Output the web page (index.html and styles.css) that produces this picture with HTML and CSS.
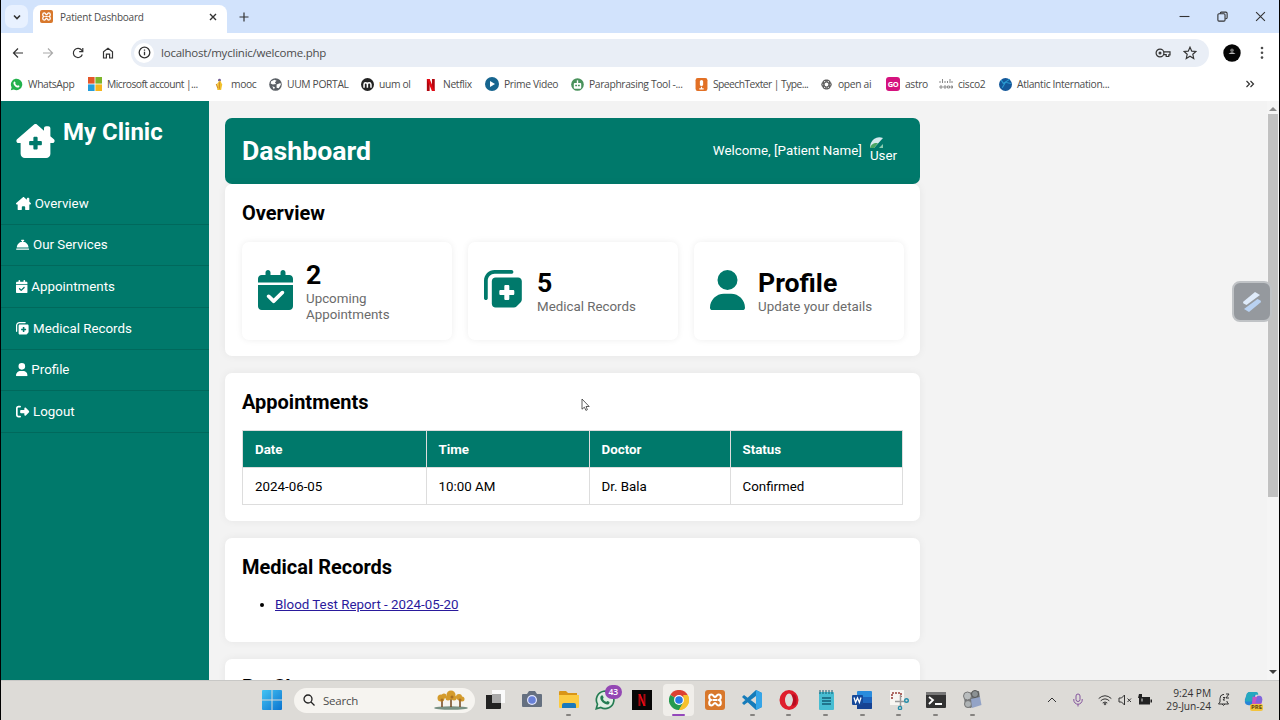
FILE: index.html
```html
<!DOCTYPE html>
<html lang="en">
<head>
    <meta charset="UTF-8">
    <meta name="viewport" content="width=device-width, initial-scale=1.0">
    <title>Patient Dashboard</title>
    <link rel="stylesheet" href="styles.css">
</head>
<body>

<!-- Shared icons -->
<svg class="sprite">
    <symbol id="i-clinic" viewBox="0 0 576 512"><path d="M543.8 287.6c17 0 32-14 32-32.1c1-9-3-17-11-24L512 185V64c0-17.7-14.3-32-32-32H448c-17.7 0-32 14.3-32 32v36.7L309.5 7c-6-5-14-7-21-7s-15 1-22 8L10 231.5c-7 7-10 15-10 24c0 18 14 32.1 32 32.1h32V448c0 35.3 28.7 64 64 64H448.5c35.5 0 64.2-28.8 64-64.3l-.7-160.2h32zM256 208c0-8.8 7.2-16 16-16h32c8.8 0 16 7.2 16 16v48h48c8.8 0 16 7.2 16 16v32c0 8.8-7.2 16-16 16H320v48c0 8.8-7.2 16-16 16H272c-8.8 0-16-7.2-16-16V320H208c-8.8 0-16-7.2-16-16V272c0-8.8 7.2-16 16-16h48V208z"/></symbol>
    <symbol id="i-home" viewBox="0 0 576 512"><path d="M575.8 255.5c0 18-15 32.1-32 32.1h-32l.7 160.2c0 2.7-.2 5.4-.5 8.1V472c0 22.1-17.9 40-40 40H392c-22.1 0-40-17.9-40-40V384c0-17.7-14.3-32-32-32H256c-17.7 0-32 14.3-32 32v88c0 22.1-17.9 40-40 40H104c-22.1 0-40-17.9-40-40V287.6H32c-18 0-32-14-32-32.1c0-9 3-17 10-24L266.4 8c7-7 15-8 22-8s15 2 21 7L416 101V64c0-18 14-32 32-32h32c18 0 32 14 32 32v121l52.800 46.500c8 7 12 15 11 24z"/></symbol>
    <symbol id="i-bell" viewBox="0 0 512 512"><path d="M216 64c-13.3 0-24 10.7-24 24s10.7 24 24 24h16v33.3C119.6 157.2 32 252.4 32 368H480c0-115.6-87.6-210.8-200-222.7V112h16c13.3 0 24-10.7 24-24s-10.7-24-24-24H216zM24 400c-13.3 0-24 10.7-24 24s10.7 24 24 24H488c13.3 0 24-10.7 24-24s-10.7-24-24-24H24z"/></symbol>
    <symbol id="i-calendar" viewBox="0 0 448 512"><path d="M128 0c17.7 0 32 14.3 32 32V64H288V32c0-17.7 14.3-32 32-32s32 14.3 32 32V64h48c26.5 0 48 21.5 48 48v48H0V112C0 85.5 21.5 64 48 64H96V32c0-17.7 14.3-32 32-32zM0 192H448V464c0 26.5-21.5 48-48 48H48c-26.5 0-48-21.5-48-48V192zM329 305c9.4-9.4 9.4-24.6 0-33.9s-24.6-9.4-33.9 0l-95 95-47-47c-9.4-9.4-24.6-9.4-33.9 0s-9.4 24.6 0 33.9l64 64c9.4 9.4 24.6 9.4 33.9 0L329 305z"/></symbol>
    <symbol id="i-notes" viewBox="0 0 512 512"><path d="M148 96H436c26 0 48 21 48 48V378c0 14-5 26-14 35l-54 54c-9 9-21 13-34 13H148c-27 0-48-21-48-48V144c0-27 21-48 48-48zM276 192c-9 0-16 7-16 16v48H212c-9 0-16 7-16 16v32c0 9 7 16 16 16h48v48c0 9 7 16 16 16h32c9 0 16-7 16-16V320h48c9 0 16-7 16-16V272c0-9-7-16-16-16H324V208c0-9-7-16-16-16H276zM24 384c-13 0-24-11-24-24V136C0 61 61 0 136 0H352c13 0 24 11 24 24s-11 24-24 24H136c-49 0-88 39-88 88V360c0 13-11 24-24 24z"/></symbol>
    <symbol id="i-user" viewBox="0 0 448 512"><path d="M224 256A128 128 0 1 0 224 0a128 128 0 1 0 0 256zm-45.700 48C79.800 304 0 383.800 0 482.300C0 498.700 13.300 512 29.700 512H418.300c16.400 0 29.700-13.300 29.700-29.700C448 383.800 368.200 304 269.700 304H178.300z"/></symbol>
    <symbol id="i-logout" viewBox="0 0 512 512"><path d="M377.9 105.9L500.7 228.7c7.2 7.2 11.3 17.1 11.3 27.3s-4.1 20.1-11.3 27.3L377.9 406.1c-6.4 6.4-15 9.9-24 9.9c-18.7 0-33.9-15.2-33.9-33.9V320H192c-17.7 0-32-14.3-32-32v-64c0-17.7 14.3-32 32-32h128v-62.1c0-18.7 15.2-33.9 33.9-33.9c9 0 17.6 3.6 24 9.9zM160 96H96c-17.7 0-32 14.3-32 32v256c0 17.7 14.3 32 32 32h64c17.7 0 32 14.3 32 32s-14.3 32-32 32H96c-53 0-96-43-96-96V128C0 75 43 32 96 32h64c17.7 0 32 14.3 32 32s-14.3 32-32 32z"/></symbol>
    <symbol id="i-xampp" viewBox="0 0 20 20"><rect width="20" height="20" rx="3" fill="#d8782c"/><path d="M6.500 4.500C3.500 4.500 3.500 9 6 10C3.500 11 3.500 15.500 6.500 15.500C8.500 15.500 8.500 13 10 13S11.500 15.500 13.500 15.500C16.500 15.500 16.500 11 14 10C16.500 9 16.500 4.500 13.500 4.500C11.500 4.500 11.500 7 10 7S8.500 4.500 6.500 4.500z" fill="none" stroke="#fff" stroke-width="2"/><path d="M8 10h4" stroke="#fff" stroke-width="2"/></symbol>
    <symbol id="i-whatsapp" viewBox="0 0 24 24"><path d="M1.500 22.500L3 17A10.500 10.500 0 1 1 7 21z"/></symbol>
    <symbol id="i-phone" viewBox="0 0 24 24"><path d="M8 6.500c.8-.3 1.300 0 1.600.8l.7 1.700c.2.500-.9 1.400-.7 1.800.8 1.600 2 2.700 3.700 3.400.5.200 1.300-1.300 1.800-1l2 1c.7.300.4 2.100-.7 2.800-3.500 2-10.500-3.600-10-8 .1-1.300.8-2.200 1.600-2.500z"/></symbol>
</svg>

<div class="window">

    <div class="tab-strip">
        <div class="tab-search"><svg viewBox="0 0 10 10"><path d="M2 3.500l3 3 3-3"/></svg></div>
        <div class="tab">
            <svg class="tab-favicon"><use href="#i-xampp"/></svg>
            <span class="tab-title">Patient Dashboard</span>
            <svg class="tab-close" viewBox="0 0 8 8"><path d="M1 1l6 6M7 1L1 7"/></svg>
        </div>
        <svg class="new-tab" viewBox="0 0 10 10"><path d="M5 .5v9M.5 5h9"/></svg>
        <div class="window-buttons">
            <svg viewBox="0 0 10 10"><path d="M.5 5h9"/></svg>
            <svg viewBox="0 0 10 10"><rect x=".8" y="2.500" width="6.500" height="6.700" rx="1"/><path d="M3 2.500V2a1 1 0 0 1 1-1h4a1.200 1.200 0 0 1 1.200 1.200V6a1 1 0 0 1-1 1h-.7"/></svg>
            <svg viewBox="0 0 10 10"><path d="M1 1l8 8M9 1L1 9"/></svg>
        </div>
    </div>

    <div class="toolbar">
        <div class="nav-buttons">
            <svg viewBox="0 0 12 12"><path d="M11 6H1.500M6 1.500L1.500 6 6 10.500"/></svg>
            <svg class="disabled" viewBox="0 0 12 12"><path d="M1 6h9.500M6 1.500L10.500 6 6 10.500"/></svg>
            <svg viewBox="0 0 12 12"><path d="M10.300 7.500A4.600 4.600 0 1 1 9.700 3.200L10.700 4.500M10.800 1v3.700H7.200"/></svg>
            <svg viewBox="0 0 12 12"><path d="M1.500 11V4.700L6 1.200l4.500 3.500V11H7.600V7.200H4.400V11z"/></svg>
        </div>
        <div class="address">
            <span class="site-info"><svg viewBox="0 0 12 12"><circle cx="6" cy="6" r="4.900"/><path d="M6 5.400v3.200M6 3.300v1"/></svg></span>
            <span class="url">localhost/myclinic/welcome.php</span>
            <svg class="key" viewBox="0 0 16 10"><circle cx="5" cy="5" r="3.900"/><circle cx="5" cy="5" r=".9"/><path d="M8.700 3.800H15v3h-1.200v1.700h-2.600V6.600H8.700"/></svg>
            <svg class="star" viewBox="0 0 12 12"><path d="M6 1l1.500 3.400 3.600.3-2.700 2.400.8 3.600L6 8.800l-3.200 1.900.8-3.600L.9 4.700l3.600-.3z"/></svg>
        </div>
        <svg class="avatar" viewBox="0 0 18 18"><circle cx="9" cy="9" r="8.700" fill="#050505"/><circle cx="9" cy="6.300" r="1.800" fill="#777"/><path d="M5.500 10q3.500-3.500 7 0z" fill="#bbb"/></svg>
        <svg class="more" viewBox="0 0 4 14"><circle cx="2" cy="2" r="1.300"/><circle cx="2" cy="6.800" r="1.300"/><circle cx="2" cy="11.600" r="1.300"/></svg>
    </div>

    <div class="bookmarks">
        <div class="bookmark"><svg viewBox="0 0 24 24"><use href="#i-whatsapp" fill="#22b14c"/><use href="#i-phone" fill="#fff"/></svg>WhatsApp</div>
        <div class="bookmark"><svg class="wide" viewBox="0 0 14 14"><path fill="#e4572a" d="M0 0h6.600v6.600H0z"/><path fill="#7db52a" d="M7.400 0H14v6.600H7.400z"/><path fill="#259edb" d="M0 7.400h6.600V14H0z"/><path fill="#f5b51d" d="M7.400 7.400H14V14H7.400z"/></svg><span class="tight">Microsoft account |...</span></div>
        <div class="bookmark mooc"><svg viewBox="0 0 12 12"><circle cx="6" cy="2" r="1.300" fill="#6e5a94"/><path d="M4 5l2.500-3L8.500 6 7.500 11H4z" fill="#f2c22e"/><path d="M3 5.500l1.500 4M6 4v6" stroke="#d49028" stroke-width="1"/></svg>mooc</div>
        <div class="bookmark"><svg viewBox="0 0 12 12"><circle cx="6" cy="6" r="5.800" fill="#5a5f65"/><path d="M2 3l3-1.500 2 1L5.500 4 6.500 5.500 3.500 6 1.500 5zM7 6l3.500-1.500.5 1.500-2 3.500-2-.5zM3 7.500l2.500 1-1 2.200z" fill="#fff"/></svg>UUM PORTAL</div>
        <div class="bookmark"><svg viewBox="0 0 12 12"><circle cx="6" cy="6" r="6" fill="#222"/><path d="M2.800 9V6q0-1.600 1.500-1.600T5.900 6v3V6q0-1.600 1.600-1.600T9.200 6v3" fill="none" stroke="#fff" stroke-width="1.400"/></svg>uum ol</div>
        <div class="bookmark netflix"><svg viewBox="0 0 12 14"><path d="M1 1h3v13H1zM6.500 1h3v13h-3z" fill="#b1060f"/><path d="M1 1h3l5.500 13h-3z" fill="#e50914"/></svg>Netflix</div>
        <div class="bookmark"><svg class="wide" viewBox="0 0 14 14"><circle cx="7" cy="7" r="7" fill="#17658f"/><path d="M5 4l5 3-5 3z" fill="#fff"/></svg>Prime Video</div>
        <div class="bookmark"><svg viewBox="0 0 14 14"><circle cx="7" cy="7" r="6.800" fill="#4a925c"/><rect x="3" y="5.500" width="8" height="6" rx="1" fill="#fff"/><path d="M7 6V2.500" stroke="#fff" stroke-width="1.500"/><path d="M4.500 8h2M7.500 8h2" stroke="#4a925c" stroke-width="1.500"/></svg><span>Paraphrasing Tool -...</span></div>
        <div class="bookmark"><svg viewBox="0 0 12 12"><rect x=".5" width="11" height="12" rx="2" fill="#e27025"/><rect x="4.500" y="1.800" width="3" height="5.600" rx="1.500" fill="#fff"/><path d="M6 8v2.500M4 10h4" stroke="#fff"/></svg><span class="tight">SpeechTexter | Type...</span></div>
        <div class="bookmark"><svg class="small" viewBox="0 0 12 12"><g fill="none" stroke="#555"><ellipse cx="6" cy="6" rx="5" ry="2.500"/><ellipse cx="6" cy="6" rx="5" ry="2.500" transform="rotate(60 6 6)"/><ellipse cx="6" cy="6" rx="5" ry="2.500" transform="rotate(120 6 6)"/><circle cx="6" cy="6" r="5"/></g></svg>open ai</div>
        <div class="bookmark"><span class="go">GO</span>astro</div>
        <div class="bookmark"><svg class="wide" viewBox="0 0 14 12"><path d="M1 3v2M3.500 1v4M6 3v2M8.500 3v2M11 1v4M13 3v2" stroke="#888"/><path d="M1 8h2v2H1zM5 8h2v2H5zM8.500 8h2v2h-2zM12 8h1.500v2H12z" fill="none" stroke="#777" stroke-width=".8"/></svg>cisco2</div>
        <div class="bookmark"><svg viewBox="0 0 12 12"><circle cx="6" cy="6" r="6" fill="#14589a"/><path d="M2 2l2 3 6-4M3 9l3-5 5 1" stroke="#2a9ad0" fill="none"/></svg>Atlantic Internation...</div>
        <svg class="overflow" viewBox="0 0 10 8"><path d="M1.500 1l3 3-3 3M5.500 1l3 3-3 3"/></svg>
    </div>

    <div class="viewport">
        <nav class="sidebar">
            <div class="logo"><svg><use href="#i-clinic"/></svg><h2>My Clinic</h2></div>
            <ul>
                <li><svg class="w576"><use href="#i-home"/></svg> Overview</li>
                <li><svg><use href="#i-bell"/></svg> Our Services</li>
                <li><svg class="w448"><use href="#i-calendar"/></svg> Appointments</li>
                <li><svg><use href="#i-notes"/></svg> Medical Records</li>
                <li><svg class="w448"><use href="#i-user"/></svg> Profile</li>
                <li><svg><use href="#i-logout"/></svg> Logout</li>
            </ul>
        </nav>

        <main class="main-content">
            <header>
                <h1>Dashboard</h1>
                <div class="user-info">
                    <span>Welcome, [Patient Name]</span>
                    <div class="user-image">
                        <svg viewBox="0 0 13 12"><path d="M0 11Q0 5 4 2t9-1L4 11z" fill="#d5e9ed"/><path d="M0 11q1-4 5-5l3 0-4 5z" fill="#4aa564"/><path d="M9 11l4-4v4z" fill="#8acbb0"/></svg>
                        <span>User</span>
                    </div>
                </div>
            </header>

            <section>
                <h2>Overview</h2>
                <div class="cards">
                    <div class="card">
                        <svg class="w448"><use href="#i-calendar"/></svg>
                        <div><h3>2</h3><p>Upcoming Appointments</p></div>
                    </div>
                    <div class="card">
                        <svg><use href="#i-notes"/></svg>
                        <div><h3>5</h3><p>Medical Records</p></div>
                    </div>
                    <div class="card">
                        <svg class="w448"><use href="#i-user"/></svg>
                        <div><h3>Profile</h3><p>Update your details</p></div>
                    </div>
                </div>
            </section>

            <section>
                <h2>Appointments</h2>
                <table>
                    <thead>
                        <tr><th class="date">Date</th><th class="time">Time</th><th class="doctor">Doctor</th><th>Status</th></tr>
                    </thead>
                    <tbody>
                        <tr><td>2024-06-05</td><td>10:00 AM</td><td>Dr. Bala</td><td>Confirmed</td></tr>
                    </tbody>
                </table>
            </section>

            <section class="records">
                <h2>Medical Records</h2>
                <ul><li><a href="#">Blood Test Report - 2024-05-20</a></li></ul>
            </section>

            <section class="profile">
                <h2>Profile</h2>
            </section>
        </main>

        <div class="scrollbar">
            <svg viewBox="0 0 8 5"><path d="M0 5l4-4 4 4z" fill="#8b8b8b"/></svg>
            <div class="thumb"></div>
            <svg viewBox="0 0 8 5"><path d="M0 0l4 4 4-4z" fill="#404040"/></svg>
        </div>
    </div>

    <div class="taskbar">
        <div class="start"><svg viewBox="0 0 20 20"><defs><linearGradient id="win" x2="1" y2="1"><stop stop-color="#45c4f3"/><stop offset="1" stop-color="#0a73cf"/></linearGradient></defs><path fill="url(#win)" d="M0 1q0-1 1-1h8.500v9.500H0zM10.500 0H19q1 0 1 1v8.500h-9.500zM0 10.500h9.500V20H1q-1 0-1-1zM10.500 10.500H20V19q0 1-1 1h-8.500z"/></svg></div>
        <div class="search">
            <svg class="lens" viewBox="0 0 12 12"><circle cx="5" cy="5" r="4"/><path d="M8 8l3.500 3.500"/></svg>
            <span>Search</span>
            <svg class="trees" viewBox="0 0 36 20"><ellipse cx="18" cy="18" rx="17" ry="1.800" fill="#789083"/><path d="M9 17V8M18 17V6M27 17V8" stroke="#70451c" stroke-width="1.500"/><g fill="#d49b2c"><circle cx="8" cy="8" r="3.500"/><circle cx="11" cy="6" r="2.500"/><circle cx="18" cy="5" r="4.500"/><circle cx="15" cy="8" r="2.500"/><circle cx="21" cy="8" r="2.500"/><circle cx="26" cy="7" r="3"/><circle cx="29" cy="9" r="2.500"/></g><g fill="#a87024"><circle cx="9" cy="10" r="1.500"/><circle cx="19" cy="7" r="1.500"/><circle cx="27" cy="10" r="1.500"/></g></svg>
        </div>
        <div class="apps">
            <div><svg viewBox="0 0 20 20"><path fill="#fafafa" d="M7 0h13v13H7z"/><path fill="#aaa" d="M7 4h9v9H7z"/><path fill="#222" d="M1 5h6v8h9v5q0 1-1 1H1z"/></svg></div>
            <div><svg viewBox="0 0 20 20"><path d="M0 5q0-1 1-1h4l2-3h6l2 3h4q1 0 1 1v11q0 1-1 1H1q-1 0-1-1z" fill="#657080"/><circle cx="10" cy="10" r="5" fill="#e3e7ff"/><circle cx="10" cy="10" r="3.800" fill="#6881d8"/></svg></div>
            <div class="open"><svg viewBox="0 0 20 20"><path d="M0 2q0-1 1-1h6l2 2h9v5H0z" fill="#d99518"/><path d="M0 5h20v12q0 1-1 1H1q-1 0-1-1z" fill="#fccb42"/><path d="M3 18v-3q0-2 2-2h10q2 0 2 2v3z" fill="#1979bd"/></svg></div>
            <div><svg viewBox="0 0 24 24"><use href="#i-whatsapp" fill="#e0eee3" stroke="#247c52" stroke-width="2"/><use href="#i-phone" fill="#247c52"/></svg><b class="badge">43</b></div>
            <div><svg viewBox="0 0 20 20"><rect width="20" height="20" fill="#070707"/><path d="M6.500 4h2v12h-2zM11.500 4h2v12h-2z" fill="#a70810"/><path d="M6.500 4h2l5 12h-2z" fill="#e50914"/></svg></div>
            <div class="active"><svg viewBox="0 0 20 20"><path d="M10 10L1.300 5A10 10 0 0 1 18.700 5z" fill="#dd4132"/><path d="M10 10l-8.700-5A10 10 0 0 0 10 20z" fill="#259b50"/><path d="M10 10l8.700-5A10 10 0 0 1 10 20z" fill="#f6c12d"/><path d="M10 20l4.300-7.500-4.300-2-5 2z" fill="#259b50"/><path d="M10 20l4.300-7.500V5h4.400A10 10 0 0 1 10 20z" fill="#f6c12d"/><circle cx="10" cy="10" r="4.900" fill="#fff"/><circle cx="10" cy="10" r="3.800" fill="#2878e5"/></svg></div>
            <div><svg><use href="#i-xampp"/></svg></div>
            <div class="open"><svg viewBox="0 0 20 20"><path d="M14 0l6 3v14l-6 3L0 7l2-2 12 9V6L2 15l-2-2z" fill="#167cba"/><path d="M14 0l6 3v14l-6 3z" fill="#35a5e8"/></svg></div>
            <div class="open"><svg viewBox="0 0 20 20"><path d="M10 0a9.500 10 0 1 0 0 20a9.500 10 0 1 0 0-20zM10 3.500a4 6.500 0 1 1 0 13a4 6.500 0 1 1 0-13z" fill="#df1e2c" fill-rule="evenodd"/><path d="M12.500 4.800q4.500-2.500 5 5t-5 5.400q1.500-2 1.500-5.200t-1.500-5.200z" fill="#b80d22"/></svg></div>
            <div class="open"><svg viewBox="0 0 20 20"><rect x="3" y="2" width="15" height="18" rx="1" fill="#47bdd2"/><path d="M4 0v4M7 0v4M10 0v4M13 0v4M16 0v4" stroke="#175b70"/><path d="M6 8h9M6 11h9M6 14h9" stroke="#155d77" stroke-width="1.500"/></svg></div>
            <div class="open"><svg viewBox="0 0 20 20"><rect x="5" y="1" width="15" height="18" rx="1" fill="#2a8cdd"/><path d="M5 7h15v6H5z" fill="#1e65be"/><path d="M5 13h15v5q0 1-1 1H5z" fill="#164292"/><rect y="5" width="11" height="10" rx="1" fill="#16499a"/><path d="M2 7.500l1.600 5L5.500 8l1.900 4.500L9 7.500" stroke="#fff" stroke-width="1.300" fill="none"/></svg></div>
            <div class="open"><svg viewBox="0 0 20 20"><path d="M1 0h14v15H1z" fill="#f8f6f2"/><path d="M3 9V3h9v4" fill="none" stroke="#9b443d" stroke-width="1.600" stroke-dasharray="2 1"/><path d="M6 11.500h9.500M11.500 17V5" stroke="#999" stroke-width="1.500"/><circle cx="17.500" cy="10.500" r="1.800" fill="none" stroke="#248da8" stroke-width="1.400"/><circle cx="11" cy="18" r="1.600" fill="none" stroke="#248da8" stroke-width="1.400"/></svg></div>
            <div class="open"><svg viewBox="0 0 20 20"><rect y="2" width="20" height="16" rx="1" fill="#333"/><path d="M0 2h20v3H0z" fill="#777"/><path d="M3 7l4 3-4 4M9 14h7" stroke="#fff" stroke-width="1.800" fill="none"/></svg></div>
            <div class="open"><svg viewBox="0 0 20 20"><path d="M2 6l4-3 11-2 1 7-9 10-6-1z" fill="#6d7376"/><circle cx="5.500" cy="6" r="4" fill="#b9bdbe" stroke="#777"/><circle cx="13" cy="4" r="3.500" fill="#8c9294" stroke="#555"/><circle cx="6" cy="14" r="3.500" fill="#aeb3b5" stroke="#777"/><path d="M9 9l9-2 1.500 8L10 18z" fill="#93a3c6"/></svg></div>
        </div>
        <div class="tray">
            <svg class="chevron" viewBox="0 0 10 10"><path d="M1 7l4-4 4 4"/></svg>
            <svg class="mic" viewBox="0 0 12 14"><rect x="4" y="1" width="4" height="7.500" rx="2"/><path d="M1.800 6v1a4.200 4.200 0 0 0 8.400 0V6M6 11v2.500"/></svg>
            <svg class="wifi" viewBox="0 0 14 12"><path d="M.7 4.500Q7-1 13.300 4.500M2.700 6.800Q7 3 11.300 6.800M4.700 9Q7 7 9.300 9"/><circle cx="7" cy="10" r=".8"/></svg>
            <svg class="volume" viewBox="0 0 14 12"><path d="M1 4h2.500L6.500 1v10L3.500 8H1zM9.500 4.500l3.500 3.500M13 4.500L9.500 8"/></svg>
            <svg class="battery" viewBox="0 0 14 12"><path d="M1 3h11v7.500H1z" fill="#222"/><path d="M12.500 5.500H14v3h-1.500zM1 0h3v4H0z" fill="#222"/><path d="M4 4.500v3" stroke="#ddd"/></svg>
            <div class="clock"><span>9:24 PM</span><span>29-Jun-24</span></div>
            <svg class="notify" viewBox="0 0 14 14"><path d="M7 1.500H6Q3 2 3 5.500V9L1.500 11h10L10 9V8M5 11q1.500 3 3 0M9 1h3L9 5h3M6 4.500h2L6 7h2"/></svg>
            <div class="copilot"><svg viewBox="0 0 20 20"><path d="M6 1h7l-4 14H5Q0 15 1 9l2-6q1-2 3-2z" fill="#2684d8"/><path d="M5 1h8q2 0 2 3h-4l-3 7H1l2-8z" fill="#25a9be"/><path d="M9 6h7q4 0 3 5l-2 6q-1 2-3 2H8z" fill="#c557c4"/><path d="M14 5h3q3 1 2 6l-1 2h-6z" fill="#8165dd"/></svg><b>PRE</b></div>
        </div>
    </div>
</div>

<!-- Floating extension button -->
<div class="floating"><svg viewBox="0 0 24 24"><path d="M15 2L3.500 11.500q-1 1 0 2l3 1.500L20 5z" fill="#dfebfa"/><path d="M9 22l11.500-9.500q1-1 0-2l-3-1.500L4 19z" fill="#b9d2f2"/></svg></div>

<svg class="cursor" viewBox="0 0 9 13"><path d="M1 1v10.200l2.400-2 1.500 3.200 1.500-.7L5 8.500h3.200z" fill="#fff" stroke="#333" stroke-width=".8"/></svg>

</body>
</html>
```
FILE: styles.css
```css
/* The zoomed page inside the browser is sized in rem */
html {
    font-size: 13.333px;
}

* {
    box-sizing: border-box;
}

body {
    margin: 0;
    background-color: #000;
    font-family: Roboto, sans-serif;
    overflow: hidden;
}

svg {
    display: block;
    flex: none;
    fill: currentColor;
}

h1, h2, h3, p, ul {
    margin: 0;
    padding: 0;
}

.sprite {
    position: absolute;
    width: 0;
    height: 0;
}

.window {
    display: flex;
    flex-direction: column;
    width: 1278px;
    height: 720px;
    margin: 0 1px;
    background-color: #fff;
    overflow: hidden;
}

/* Browser */
.tab-strip,
.toolbar,
.bookmarks,
.taskbar {
    font-family: "Open Sans", "Noto Sans", sans-serif;
    color: #4c4c4c;
}

.tab-strip {
    display: flex;
    align-items: center;
    height: 33px;
    flex: none;
    background-color: #d2e3fc;
}

.tab-strip svg:not(.tab-favicon),
.nav-buttons svg,
.site-info svg,
.key,
.star,
.overflow {
    fill: none;
    stroke: #333;
    stroke-width: 1.2;
}

.tab-search {
    display: flex;
    align-items: center;
    justify-content: center;
    width: 23px;
    height: 23px;
    margin-left: 4px;
    border-radius: 7px;
    background-color: #e8f1ff;
}

.tab-search svg {
    width: 10px;
    height: 10px;
    stroke-width: 1.6 !important;
}

.tab {
    display: flex;
    align-items: center;
    width: 194px;
    height: 28px;
    margin: 5px 0 0 5px;
    padding: 0 10px 5px 7px;
    border-radius: 8px 8px 0 0;
    background-color: #fff;
}

.tab-favicon {
    width: 13px;
    height: 13px;
}

.tab-title {
    flex: 1;
    margin-left: 7px;
    font-size: 10px;
    letter-spacing: -0.2px;
}

.tab-close {
    width: 8px;
    height: 8px;
    stroke-width: 1.4 !important;
}

.new-tab {
    width: 10px;
    height: 10px;
    margin-left: 12px;
}

.window-buttons {
    display: flex;
    gap: 27px;
    margin-left: auto;
    margin-right: 13px;
}

.window-buttons svg {
    width: 11px;
    height: 11px;
    stroke-width: 1 !important;
}

.toolbar {
    display: flex;
    align-items: center;
    height: 39px;
    flex: none;
}

.nav-buttons {
    display: flex;
    gap: 18px;
    margin-left: 11px;
}

.nav-buttons svg {
    width: 12px;
    height: 12px;
}

.nav-buttons .disabled {
    stroke: #aaa;
}

.address {
    display: flex;
    align-items: center;
    width: 1078px;
    height: 28px;
    margin-left: 17px;
    padding-left: 3px;
    border-radius: 14px;
    background-color: #e9eef6;
}

.site-info {
    display: flex;
    align-items: center;
    justify-content: center;
    width: 20px;
    height: 20px;
    border-radius: 50%;
    background-color: #fff;
}

.site-info svg {
    width: 13px;
    height: 13px;
}

.url {
    flex: 1;
    margin-left: 7px;
    font-size: 11.5px;
    letter-spacing: -0.22px;
}

.key {
    width: 16px;
    height: 10px;
}

.star {
    width: 14px;
    height: 14px;
    margin: 0 12px 0 12px;
    stroke-width: 1;
}

.avatar {
    width: 18px;
    height: 18px;
    margin-left: 14px;
}

.more {
    width: 4px;
    height: 14px;
    margin-left: 19px;
}

.bookmarks {
    display: grid;
    grid-template-columns: 78px 127px 54px 92px 66px 58px 86px 124px 125px 66px 53px 60px 246px 10px;
    align-items: center;
    height: 29px;
    flex: none;
    padding: 0 0 5px 9px;
    font-size: 10.3px;
    letter-spacing: -0.35px;
}

.bookmark {
    display: flex;
    align-items: center;
    gap: 5px;
    white-space: nowrap;
}

.bookmark svg {
    width: 13px;
    height: 13px;
}

.bookmark svg.wide {
    width: 14px;
    height: 14px;
}

.bookmark svg.small {
    width: 11px;
    height: 11px;
    margin: 0 1px;
}

.mooc {
    margin-left: -2px;
}

.netflix {
    margin-left: -2px;
}

.tight {
    letter-spacing: -0.55px;
}

.go {
    width: 14px;
    height: 14px;
    border-radius: 3px;
    background-color: #d5127e;
    color: #fff;
    font-size: 7.5px;
    font-weight: bold;
    line-height: 14px;
    text-align: center;
}

.overflow {
    width: 10px;
    height: 8px;
}

/* Clinic page */
.viewport {
    display: flex;
    height: 579px;
    flex: none;
    background-color: #f3f3f3;
    overflow: hidden;
}

.sidebar {
    width: 208px;
    flex: none;
    background-color: #00796b;
    color: #fff;
}

.logo {
    display: flex;
    align-items: flex-start;
    height: 82px;
    padding: 16px 15px 0;
}

.logo svg {
    width: 39px;
    height: 34px;
    margin-top: 7px;
}

.logo h2 {
    margin-left: 8px;
    font-size: 1.8rem;
    line-height: 30px;
}

.sidebar ul {
    list-style: none;
}

.sidebar li {
    display: flex;
    align-items: center;
    gap: 3.3px;
    height: 41.67px;
    padding-left: 15.4px;
    border-bottom: 1px solid #00695c;
    font-size: 1rem;
}

.sidebar li svg {
    width: 1rem;
    height: 1rem;
}

.sidebar li svg.w576 {
    width: 1.125rem;
}

.sidebar li svg.w448 {
    width: 0.875rem;
}

.main-content {
    width: 695px;
    margin: 16.6px auto 0 16px;
    font-size: 1rem;
}

header {
    display: flex;
    align-items: center;
    justify-content: space-between;
    height: 66.4px;
    padding: 0 23px 0 17px;
    border-radius: 7px;
    background-color: #00796b;
    color: #fff;
}

header h1 {
    font-size: 2rem;
}

.user-info {
    display: flex;
    align-items: center;
    gap: 8px;
    padding-bottom: 1px;
}

.user-image {
    display: flex;
    flex-direction: column;
    padding-bottom: 1px;
    line-height: 14px;
}

.user-image svg {
    width: 13px;
    height: 12px;
}

section {
    height: 148px;
    margin-bottom: 17px;
    padding: 17px 17px;
    border-radius: 7px;
    background-color: #fff;
    box-shadow: 0 0 8px rgba(0, 0, 0, 0.06);
}

header + section {
    height: 172px;
    padding: 17px 16px 0 17px;
}

section h2 {
    font-size: 1.5rem;
    line-height: 24px;
}

.cards {
    display: flex;
    gap: 16px;
    margin-top: 17px;
}

.card {
    display: flex;
    align-items: center;
    gap: 13px;
    flex: 1;
    height: 98px;
    padding: 0 16px;
    border-radius: 7px;
    background-color: #fff;
    box-shadow: 0 0 7px rgba(0, 0, 0, 0.07);
}

.card svg {
    width: 40px;
    height: 40px;
    margin-bottom: 1px;
    color: #00796b;
}

.card svg.w448 {
    width: 35px;
}

.card h3 {
    font-size: 2rem;
    line-height: 32px;
}

.card p {
    color: #6b6b6b;
    line-height: 16px;
}

table {
    width: 661px;
    margin-top: 16px;
    border-collapse: collapse;
    table-layout: fixed;
}

th, td {
    height: 37px;
    padding: 1px 12px 0;
    border: 1px solid #ddd;
    text-align: left;
}

th {
    background-color: #00796b;
    color: #fff;
}

.date {
    width: 183.5px;
}

.time {
    width: 163px;
}

.doctor {
    width: 141px;
}

section.records {
    height: 104px;
}

.records ul {
    margin-top: 18px;
    padding-left: 33px;
}

.records a {
    color: #2a1a9c;
}

section.profile {
    padding-top: 16px;
}

.scrollbar {
    display: flex;
    flex-direction: column;
    align-items: center;
    width: 12px;
    padding: 5px 0 5px;
    background-color: #f5f5f5;
}

.scrollbar svg {
    width: 8px;
    height: 5px;
}

.thumb {
    width: 10px;
    height: 383px;
    margin: 3px 0 auto;
    background-color: #c1c1c1;
}

/* Taskbar */
.taskbar {
    display: flex;
    align-items: center;
    flex: 1;
    padding-bottom: 1px;
    border-top: 1px solid #c8c8c6;
    background-color: #dddbd7;
}

.start svg {
    width: 20px;
    height: 20px;
    margin-left: 261px;
}

.search {
    display: flex;
    align-items: center;
    width: 181px;
    height: 25px;
    margin-left: 12px;
    padding: 0 6px 0 9px;
    border-radius: 13px;
    background-color: #f6f4f0;
    font-size: 11.5px;
}

.search span {
    flex: 1;
    margin-left: 8px;
    letter-spacing: -0.2px;
}

.lens {
    width: 12px;
    height: 12px;
    fill: none;
    stroke: #222;
    stroke-width: 1.3;
}

.trees {
    width: 36px;
    height: 20px;
}

.apps {
    display: grid;
    grid-template-columns: repeat(14, 36.7px);
    margin-left: 2px;
}

.apps div {
    position: relative;
    display: flex;
    align-items: center;
    justify-content: center;
    height: 32px;
}

.apps svg {
    width: 20px;
    height: 20px;
}

.apps .open::after,
.apps .active::after {
    content: "";
    position: absolute;
    bottom: 0;
    width: 5px;
    height: 2px;
    border-radius: 1px;
    background-color: #858380;
}

.apps .active {
    width: 31px;
    margin: 0 auto;
    border-radius: 4px;
    background-color: #f0eeea;
}

.apps .active::after {
    width: 13px;
    background-color: #9448bb;
}

.badge {
    position: absolute;
    top: 1px;
    right: 2px;
    width: 17px;
    height: 14px;
    border-radius: 7px;
    background-color: #9448b4;
    color: #fff;
    font-size: 8.5px;
    font-weight: 600;
    line-height: 14px;
    text-align: center;
}

.tray {
    display: flex;
    align-items: center;
    margin-left: auto;
    margin-right: 16px;
}

.tray svg {
    width: 14px;
    height: 14px;
    color: #222;
}

.tray > svg:not(.battery) {
    fill: none;
    stroke: #333;
    stroke-width: 1;
}

.tray .chevron {
    width: 10px;
    height: 10px;
    margin-right: 15px;
}

.tray > svg.mic:not(.battery) {
    width: 12px;
    margin-right: 14px;
    stroke: #84559d;
}

.tray .wifi,
.tray .volume {
    margin-right: 6px;
}

.clock {
    display: flex;
    flex-direction: column;
    width: 54px;
    margin: 0 6px 0 5px;
    font-size: 10.2px;
    line-height: 13px;
    letter-spacing: -0.05px;
    text-align: right;
    color: #333;
    white-space: nowrap;
}

.copilot {
    position: relative;
    margin-left: 13px;
}

.copilot svg {
    width: 19px;
    height: 19px;
}

.copilot b {
    position: absolute;
    right: 0;
    bottom: -1px;
    padding: 0 1px;
    border-radius: 2px;
    background-color: #f3c43c;
    color: #5b4414;
    font-size: 6px;
    line-height: 7px;
}

/* Things that lie over the page */
.floating {
    position: absolute;
    top: 281px;
    left: 1232px;
    display: flex;
    align-items: center;
    justify-content: center;
    width: 40px;
    height: 41px;
    border: 2px solid #c0c3c6;
    border-radius: 8px;
    background-color: #95999e;
}

.floating svg {
    width: 24px;
    height: 24px;
}

.cursor {
    position: absolute;
    top: 398px;
    left: 581px;
    width: 9px;
    height: 13px;
}
```
